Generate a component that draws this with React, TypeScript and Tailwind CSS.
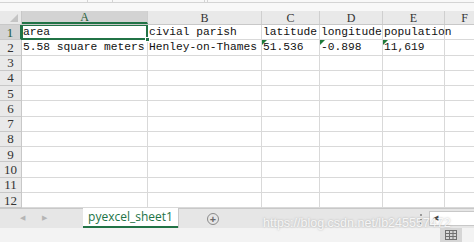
const cols = [
  { key: "A", w: "w-[126px]" },
  { key: "B", w: "w-[114px]" },
  { key: "C", w: "w-[58px]" },
  { key: "D", w: "w-[63px]" },
  { key: "E", w: "w-[62px]" },
  { key: "F", w: "w-[40px]" },
];

const data: Record<number, (string | null)[]> = {
  1: ["area", "civial parish", "latitude", "longitude", "population", null],
  2: ["5.58 square meters", "Henley-on-Thames", "51.536", "-0.898", "11,619", null],
};

// cells flagged "number stored as text"
const flagged = new Set(["2C", "2D", "2E"]);

const mono = "font-['Liberation_Mono',monospace]";

function Cell({ row, col, idx }: { row: number; col: (typeof cols)[number]; idx: number }) {
  const text = data[row]?.[idx] ?? "";
  const selected = row === 1 && col.key === "A";
  return (
    <div
      className={`relative ${col.w} shrink-0 h-full border-r border-b border-[#d9d9d9] overflow-visible whitespace-nowrap pl-[1px] text-[11.25px] leading-[15px] text-[#111] ${mono}`}
    >
      {flagged.has(`${row}${col.key}`) && (
        <span className="absolute left-0 top-0 w-0 h-0 border-t-[5px] border-r-[5px] border-t-[#1e7a3a] border-r-transparent" />
      )}
      <span className="relative z-10">{text}</span>
      {selected && (
        <>
          <span className="absolute -left-[1px] -top-[1px] -right-[1px] -bottom-[1px] border-2 border-[#217346] z-20" />
          <span className="absolute -right-[3px] -bottom-[3px] w-[5px] h-[5px] bg-[#217346] border border-white z-30" />
        </>
      )}
    </div>
  );
}

export default function App() {
  const rows = Array.from({ length: 12 }, (_, i) => i + 1);
  return (
    <div className="w-[474px] h-[242px] overflow-hidden bg-white flex flex-col font-['Open_Sans',sans-serif]">
      {/* remnant of the formula bar */}
      <div className="h-[11px] shrink-0 bg-[#f8f8f8] flex flex-col">
        <div className="h-[3px] flex border-b border-[#d4d4d4]">
          <div className="w-[88px] border-r border-[#d4d4d4]" />
          <div className="w-[25px] border-r border-[#d4d4d4]" />
          <div className="w-[92px] border-r border-[#d4d4d4]" />
          <div className="w-[3px] border-r border-[#d4d4d4]" />
        </div>
      </div>

      {/* column headers */}
      <div className="h-[14px] shrink-0 flex bg-[#e9e9e9] border-b border-[#c8c8c8]">
        <div className="w-[22px] shrink-0 border-r border-[#c8c8c8] relative">
          <span className="absolute right-[3px] bottom-[2px] w-0 h-0 border-b-[8px] border-l-[8px] border-b-[#c4c4c4] border-l-transparent" />
        </div>
        {cols.map((c) => (
          <div
            key={c.key}
            className={`${c.w} shrink-0 flex items-center justify-center border-r border-[#cfcfcf] text-[12px] leading-none font-['Liberation_Serif',serif] ${
              c.key === "A"
                ? "bg-[#d3d3d3] text-[#1f5c36] border-b-2 border-b-[#217346]"
                : "text-[#333]"
            }`}
          >
            {c.key}
          </div>
        ))}
      </div>

      {/* grid */}
      <div className="flex-1 min-h-0 overflow-hidden flex flex-col">
        {rows.map((r) => (
          <div key={r} className="h-[15.27px] shrink-0 flex">
            <div
              className={`w-[22px] shrink-0 flex items-center justify-center border-r border-b text-[13px] leading-none font-['Liberation_Serif',serif] ${
                r === 1
                  ? "bg-[#d3d3d3] text-[#1f5c36] border-r-2 border-r-[#217346] border-b-[#c8c8c8]"
                  : "bg-[#e9e9e9] text-[#333] border-[#c8c8c8]"
              }`}
            >
              {r}
            </div>
            {cols.map((c, i) => (
              <Cell key={c.key} row={r} col={c} idx={i} />
            ))}
          </div>
        ))}
      </div>

      {/* sheet tabs */}
      <div className="relative h-[20px] shrink-0 flex items-stretch bg-[#e6e6e6] border-t border-[#c8c8c8]">
        <div className="w-[83px] flex items-center gap-[17px] pl-[20px] text-[7px] text-[#b5b5b5]">
          <span>◀</span>
          <span>▶</span>
        </div>
        <div className="w-[95px] -mt-[1px] bg-white border-b-2 border-[#217346] flex items-center justify-center text-[12px] text-[#217346] shadow-[1px_0_0_#c8c8c8]">
          pyexcel_sheet1
        </div>
        <div className="w-[70px] flex items-center justify-center">
          <span className="w-[12px] h-[12px] rounded-full border border-[#8a8a8a] flex items-center justify-center text-[11px] leading-none text-[#6a6a6a] font-bold">
            +
          </span>
        </div>
        <div className="flex-1" />
        <div className="w-[16px] flex flex-col items-center justify-center gap-[2px]">
          <span className="w-[2px] h-[2px] bg-[#9a9a9a]" />
          <span className="w-[2px] h-[2px] bg-[#9a9a9a]" />
          <span className="w-[2px] h-[2px] bg-[#9a9a9a]" />
        </div>
        <div className="w-[45px] my-[2px] bg-white border border-[#c8c8c8] border-r-0 flex items-center pl-[3px] text-[7px] text-[#444]">
          ◀
        </div>
      </div>

      {/* status bar */}
      <div className="relative h-[14px] shrink-0 bg-[#f3f3f3] flex justify-end pr-[12px]">
        <div className="w-[22px] h-full bg-[#d6d6d6] flex items-center justify-center">
          <svg width="12" height="10" viewBox="0 0 12 10" fill="none" stroke="#707070" strokeWidth="1">
            <rect x="0.5" y="0.5" width="11" height="9" />
            <line x1="4.5" y1="0.5" x2="4.5" y2="9.5" />
            <line x1="8" y1="0.5" x2="8" y2="9.5" />
            <line x1="0.5" y1="3.5" x2="11.5" y2="3.5" />
            <line x1="0.5" y1="6.5" x2="11.5" y2="6.5" />
          </svg>
        </div>
        <span className="absolute left-[263px] -top-[11px] whitespace-nowrap text-[12.5px] leading-none text-white/85 font-['Liberation_Sans',sans-serif] [text-shadow:0_0_2px_rgba(120,120,120,0.6)]">
          https://blog.csdn.net/lb245557472
        </span>
      </div>
    </div>
  );
}
